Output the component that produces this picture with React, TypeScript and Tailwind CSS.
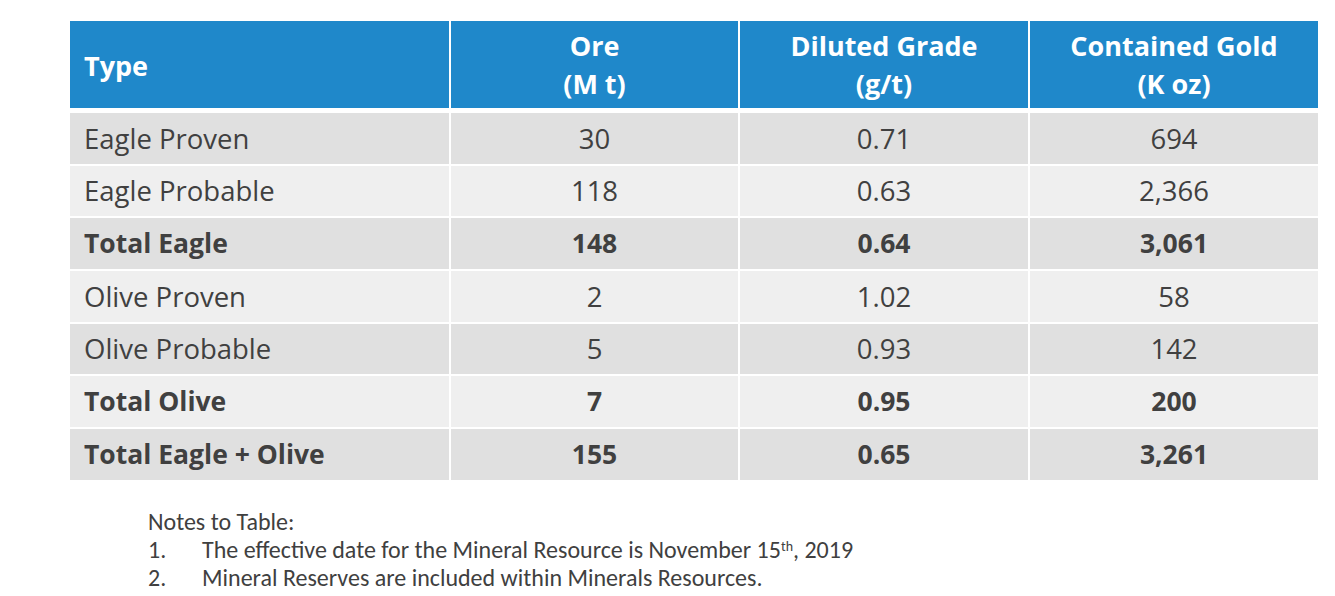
const rows = [
  { type: 'Eagle Proven', ore: '30', grade: '0.71', gold: '694', bold: false },
  { type: 'Eagle Probable', ore: '118', grade: '0.63', gold: '2,366', bold: false },
  { type: 'Total Eagle', ore: '148', grade: '0.64', gold: '3,061', bold: true },
  { type: 'Olive Proven', ore: '2', grade: '1.02', gold: '58', bold: false },
  { type: 'Olive Probable', ore: '5', grade: '0.93', gold: '142', bold: false },
  { type: 'Total Olive', ore: '7', grade: '0.95', gold: '200', bold: true },
  { type: 'Total Eagle + Olive', ore: '155', grade: '0.65', gold: '3,261', bold: true },
];

export default function App() {
  return (
    <div className="w-[1335px] h-[596px] bg-white overflow-hidden font-['Open_Sans',sans-serif]">
      <div className="pt-[21px] pl-[70px]">
        {/* header */}
        <div className="grid grid-cols-[379px_287px_288px_288px] gap-x-[2px] text-white font-bold text-[27px] leading-[38px]">
          <div className="bg-[#1f88ca] h-[87px] flex items-center pl-[14px] pt-[2px]">Type</div>
          <div className="bg-[#1f88ca] h-[87px] flex flex-col items-center justify-center">
            <span>Ore</span>
            <span>(M t)</span>
          </div>
          <div className="bg-[#1f88ca] h-[87px] flex flex-col items-center justify-center">
            <span>Diluted Grade</span>
            <span>(g/t)</span>
          </div>
          <div className="bg-[#1f88ca] h-[87px] flex flex-col items-center justify-center">
            <span>Contained Gold</span>
            <span>(K oz)</span>
          </div>
        </div>

        {/* body */}
        <div className="mt-[5px] grid grid-cols-[379px_287px_288px_288px] gap-x-[2px] gap-y-[2px] text-[#404040] text-[27.5px]">
          {rows.map((r, i) => {
            const bg = i % 2 === 0 ? 'bg-[#e0e0e0]' : 'bg-[#efefef]';
            const w = r.bold ? 'font-bold text-[26.5px]' : 'font-normal';
            return [
              <div key={r.type + 'a'} className={`${bg} ${w} h-[50.7px] flex items-center pl-[14px]`}>{r.type}</div>,
              <div key={r.type + 'b'} className={`${bg} ${w} h-[50.7px] flex items-center justify-center`}>{r.ore}</div>,
              <div key={r.type + 'c'} className={`${bg} ${w} h-[50.7px] flex items-center justify-center`}>{r.grade}</div>,
              <div key={r.type + 'd'} className={`${bg} ${w} h-[50.7px] flex items-center justify-center`}>{r.gold}</div>,
            ];
          })}
        </div>
      </div>

      {/* notes */}
      <div className="mt-[28px] pl-[148px] text-[24px] leading-[28px] text-[#404040] font-['Carlito','Liberation_Sans_Narrow','Liberation_Sans',sans-serif]">
        <p>Notes to Table:</p>
        <div className="flex">
          <span className="w-[54px]">1.</span>
          <span>
            The effective date for the Mineral Resource is November 15<sup className="text-[14px]">th</sup>, 2019
          </span>
        </div>
        <div className="flex">
          <span className="w-[54px]">2.</span>
          <span>Mineral Reserves are included within Minerals Resources.</span>
        </div>
      </div>
    </div>
  );
}
